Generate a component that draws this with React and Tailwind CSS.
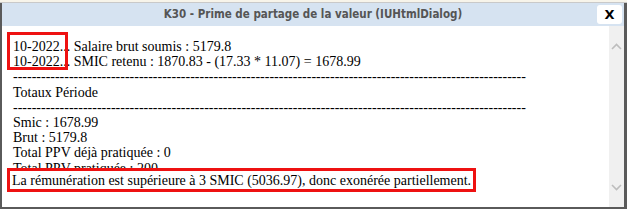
import React from 'react';

const dashes = '-'.repeat(110);

export default function App() {
  return (
    <div className="w-[627px] h-[209px] bg-[#f4f4f4] overflow-hidden relative">
      {/* strip of the page underneath */}
      <div className="h-[3px] border-b border-[#c9c9c9] bg-[#f7f4ea]" />

      <div className="relative flex flex-col h-[206px] border-l-2 border-r-[3px] border-b-2 border-[#5a5a5a]">
        {/* title bar */}
        <div className="h-[23px] flex items-center justify-center bg-[#d6e3f1] relative shrink-0">
          <span
            className="text-[11.5px] font-bold text-[#555]"
            style={{ fontFamily: '"DejaVu Sans Condensed", "DejaVu Sans", sans-serif' }}
          >
            K30 - Prime de partage de la valeur (IUHtmlDialog)
          </span>
          <div className="absolute right-[2px] top-[2px] w-[25px] h-[19px] bg-white rounded-[3px] flex items-center justify-center">
            <span className="text-[13px] font-bold text-black" style={{ fontFamily: '"DejaVu Sans", sans-serif' }}>X</span>
          </div>
        </div>

        {/* body */}
        <div className="flex flex-1 bg-white min-h-0">
          <div
            className="flex-1 pl-[11px] pt-[13px] text-[14px] leading-[15.2px] text-black overflow-hidden"
            style={{ fontFamily: '"Liberation Serif", "Times New Roman", serif' }}
          >
            <div>10-2022... Salaire brut soumis : 5179.8</div>
            <div>10-2022... SMIC retenu : 1870.83 - (17.33 * 11.07) = 1678.99</div>
            <div className="whitespace-nowrap">{dashes}</div>
            <div>Totaux Période</div>
            <div className="whitespace-nowrap">{dashes}</div>
            <div>Smic : 1678.99</div>
            <div>Brut : 5179.8</div>
            <div>Total PPV déjà pratiquée : 0</div>
            <div>Total PPV pratiquée : 200</div>
            <div className="relative -ml-[6px] -mt-[8px] w-fit border-[3px] border-[#ee1111] bg-white pl-[2px] pr-[2px] pt-[2px] pb-[1px]">
              La rémunération est supérieure à 3 SMIC (5036.97), donc exonérée partiellement.
            </div>
          </div>

          {/* scrollbar */}
          <div className="w-[15px] bg-[#f0f0f0] flex flex-col items-center justify-between pt-[17px] pb-[16px]">
            <svg width="11" height="7" viewBox="0 0 11 7" fill="none">
              <path d="M1 6L5.5 1.5L10 6" stroke="#bdbdbd" strokeWidth="1.6" />
            </svg>
            <svg width="11" height="7" viewBox="0 0 11 7" fill="none">
              <path d="M1 1L5.5 5.5L10 1" stroke="#bdbdbd" strokeWidth="1.6" />
            </svg>
          </div>
        </div>

        {/* annotation box around the periods */}
        <div className="absolute left-[5px] top-[29px] w-[61px] h-[38px] border-[3px] border-[#ee1111] pointer-events-none" />
      </div>
    </div>
  );
}
